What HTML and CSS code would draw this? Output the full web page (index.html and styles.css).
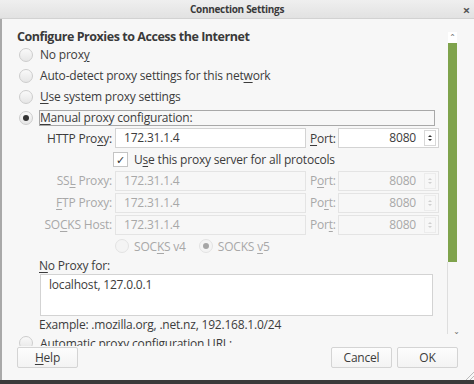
FILE: index.html
```html
<!DOCTYPE html>
<html lang="en">
<head>
    <meta charset="UTF-8">
    <title>Connection Settings</title>
    <link rel="stylesheet" href="styles.css">
</head>
<body>

<div class="window">
    <div class="titlebar">
        <span class="title">Connection Settings</span>
        <span class="close">&times;</span>
    </div>

    <div class="main">
        <div class="content">
            <h1>Configure Proxies to Access the Internet</h1>

            <div class="option"><span class="radio"></span><span>No prox<u>y</u></span></div>
            <div class="option"><span class="radio"></span><span>Auto-detect proxy settings for this net<u>w</u>ork</span></div>
            <div class="option"><span class="radio"></span><span><u>U</u>se system proxy settings</span></div>
            <div class="option"><span class="radio checked"></span><span class="focus"><u>M</u>anual proxy configuration:</span></div>

            <!-- proxy fields -->
            <div class="fields">
                <label>HTTP Pro<u>x</u>y:</label>
                <div class="input">172.31.1.4</div>
                <label class="port-label"><u>P</u>ort:</label>
                <div class="input port">8080<span class="spin"><i class="up"></i><i class="down"></i></span></div>

                <div class="check-row">
                    <span class="checkbox">&#10003;</span>
                    <span>U<u>s</u>e this proxy server for all protocols</span>
                </div>

                <label class="off">SS<u>L</u> Proxy:</label>
                <div class="input off">172.31.1.4</div>
                <label class="port-label off">P<u>o</u>rt:</label>
                <div class="input port off">8080<span class="spin"><i class="up"></i><i class="down"></i></span></div>

                <label class="off"><u>F</u>TP Proxy:</label>
                <div class="input off">172.31.1.4</div>
                <label class="port-label off">Po<u>r</u>t:</label>
                <div class="input port off">8080<span class="spin"><i class="up"></i><i class="down"></i></span></div>

                <label class="off">SO<u>C</u>KS Host:</label>
                <div class="input off">172.31.1.4</div>
                <label class="port-label off">Por<u>t</u>:</label>
                <div class="input port off">8080<span class="spin"><i class="up"></i><i class="down"></i></span></div>

                <div class="socks-row">
                    <span class="radio off"></span><span class="off">SOC<u>K</u>S v4</span>
                    <span class="radio off checked-off v5"></span><span class="off">SOCKS <u>v</u>5</span>
                </div>
            </div>

            <div class="noproxy">
                <div class="small-label"><u>N</u>o Proxy for:</div>
                <div class="textarea">localhost, 127.0.0.1</div>
                <div class="small-label">Example: .mozilla.org, .net.nz, 192.168.1.0/24</div>
            </div>

            <div class="option"><span class="radio"></span><span>Automatic proxy configuration URL:</span></div>
        </div>

        <div class="scrollbar">
            <span class="arrow">&#710;</span>
            <div class="thumb"></div>
            <div class="track"></div>
            <span class="arrow down">&#711;</span>
        </div>
    </div>

    <div class="buttons">
        <button><u>H</u>elp</button>
        <span class="spacer"></span>
        <button>Cancel</button>
        <button>OK</button>
    </div>
    <span class="grip"></span>
</div>

</body>
</html>
```

FILE: styles.css
```css
body {
    margin: 0;
    padding: 0;
    width: 474px;
    height: 384px;
    overflow: hidden;
    font-family: "Open Sans", "Noto Sans", sans-serif;
    font-size: 12px;
    letter-spacing: -0.2px;
    color: #3c3c3c;
    background-color: #3a3a3a;
}
u {
    text-decoration: underline;
    text-underline-offset: 2px;
}
.window {
    position: relative;
    height: 380px;
    background-color: #f7f7f7;
    border-left: 2px solid #a9a9a9;
    display: flex;
    flex-direction: column;
}
.titlebar {
    height: 18px;
    margin-left: -2px;
    background: linear-gradient(#efefef, #e2e2e2);
    border-bottom: 1px solid #d2d2d2;
    display: flex;
    align-items: center;
    justify-content: center;
    position: relative;
}
.title {
    font-weight: bold;
    font-size: 10px;
    letter-spacing: -0.3px;
    color: #3a3a3a;
}
.close {
    position: absolute;
    right: 4px;
    top: 1px;
    font-size: 13px;
    font-weight: bold;
    color: #555;
}
.main {
    height: 327px;
    display: flex;
    overflow: hidden;
}
.content {
    flex: 1;
    padding: 11px 0 0 15px;
}
h1 {
    margin: 0;
    font-size: 12.5px;
    font-weight: bold;
    letter-spacing: -0.45px;
    line-height: 14px;
    color: #3a3a3a;
}
.option {
    display: flex;
    align-items: center;
    gap: 7px;
    height: 21px;
    padding-left: 2px;
}
.radio {
    width: 12px;
    height: 12px;
    border: 1px solid #cdcdcd;
    border-radius: 50%;
    background: linear-gradient(#f9f9f9, #e6e6e6);
    display: inline-flex;
    align-items: center;
    justify-content: center;
    flex-shrink: 0;
}
.radio.checked::after {
    content: "";
    width: 6px;
    height: 6px;
    border-radius: 50%;
    background-color: #333;
}
.radio.off {
    background: #f4f4f4;
    border-color: #e3e3e3;
}
.radio.checked-off::after {
    content: "";
    width: 6px;
    height: 6px;
    border-radius: 50%;
    background-color: #a5a5a5;
}
.focus {
    flex: 1;
    margin-right: 12px;
    border: 1px solid #a8a8a8;
    margin-left: -1px;
    line-height: 14px;
}
.fields {
    display: grid;
    grid-template-columns: 79px 191px 32px 101px;
    grid-template-rows: 21px 21px 22px 22px 22px 21px;
    align-items: center;
    margin-left: 19px;
    margin-top: -0.5px;
}
.fields label {
    text-align: right;
    padding-right: 3px;
}
.fields .port-label {
    text-align: left;
    padding: 0 0 0 4px;
}
.input {
    height: 18px;
    border: 1px solid #d3d3d3;
    background-color: #fff;
    padding-left: 8px;
    line-height: 18px;
    position: relative;
}
.input.port {
    text-align: right;
    padding: 0 22px 0 0;
}
.input.off {
    background-color: #f7f7f7;
    border-color: #e4e4e4;
    color: #a8a8a8;
}
.off {
    color: #a8a8a8;
}
.spin {
    position: absolute;
    right: 2px;
    top: 1px;
    width: 12px;
    height: 16px;
    border: 1px solid #d8d8d8;
    box-sizing: border-box;
    display: flex;
    flex-direction: column;
    align-items: center;
    justify-content: center;
    gap: 2px;
}
.spin i {
    width: 0;
    height: 0;
    border-left: 2px solid transparent;
    border-right: 2px solid transparent;
}
.spin .up {
    border-bottom: 2px solid #333;
}
.spin .down {
    border-top: 2px solid #333;
}
.input.off .spin {
    border-color: #ececec;
}
.input.off .spin .up {
    border-bottom-color: #d0d0d0;
}
.input.off .spin .down {
    border-top-color: #d0d0d0;
}
.check-row {
    grid-column: 2 / 5;
    display: flex;
    align-items: center;
    gap: 6px;
    height: 21px;
    margin-left: -2px;
}
.checkbox {
    width: 13px;
    height: 13px;
    border: 1px solid #c4c4c4;
    background-color: #fff;
    font-size: 11px;
    line-height: 13px;
    text-align: center;
    color: #333;
}
.socks-row {
    grid-column: 2 / 5;
    display: flex;
    align-items: center;
    gap: 5px;
    height: 21px;
}
.socks-row .v5 {
    margin-left: 8px;
}
.noproxy {
    padding-left: 22px;
    padding-right: 14px;
}
.small-label {
    line-height: 17px;
}
.textarea {
    height: 36px;
    margin-left: 1px;
    border: 1px solid #d3d3d3;
    background-color: #fff;
    padding: 2px 8px;
    line-height: 16px;
}
.scrollbar {
    width: 14px;
    display: flex;
    flex-direction: column;
    align-items: flex-start;
    padding-top: 13px;
    margin-right: 13px;
}
.arrow {
    width: 9px;
    height: 11px;
    margin-left: 1px;
    background-color: #fff;
    font-size: 10px;
    line-height: 14px;
    text-align: center;
    color: #777;
}
.arrow.down {
    background: none;
    line-height: 6px;
    margin-left: 5px;
}
.thumb {
    width: 9px;
    height: 219px;
    margin-left: 1px;
    background-color: #7fa34c;
}
.track {
    flex: 1;
    width: 9px;
    border-left: 1px solid #dedede;
    max-height: 72px;
}
.buttons {
    display: flex;
    gap: 5px;
    padding: 1px 16px 0 15px;
}
.buttons .spacer {
    flex: 1;
}
button {
    width: 61px;
    height: 21px;
    font-family: inherit;
    font-size: 12px;
    letter-spacing: -0.2px;
    color: #3c3c3c;
    border: 1px solid #d4d4d4;
    border-radius: 2px;
    background: linear-gradient(#fdfdfd, #f3f3f3);
    padding: 0;
}
.grip {
    position: absolute;
    right: 0;
    bottom: 0;
    width: 10px;
    height: 10px;
    background: linear-gradient(135deg, transparent 55%, #bbb 55%, #bbb 62%, transparent 62%, transparent 75%, #bbb 75%, #bbb 82%, transparent 82%);
}
```
